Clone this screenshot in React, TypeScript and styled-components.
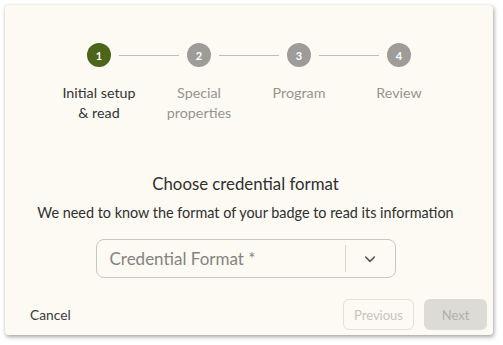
import React from "react";
import styled, { createGlobalStyle } from "styled-components";

const Global = createGlobalStyle`
  html, body { margin: 0; padding: 0; background: #ffffff; }
  body { font-family: "Lato", "Noto Sans", sans-serif; }
`;

const Page = styled.div`
  padding: 5px 10px 10px 5px;
`;

const Card = styled.div`
  width: 488px;
  height: 330px;
  box-sizing: border-box;
  background: #fdfaf3;
  border-radius: 3px;
  box-shadow: 1px 2px 4px rgba(0, 0, 0, 0.35), 0 0 1px rgba(0, 0, 0, 0.2);
  display: flex;
  flex-direction: column;
  padding: 38px 6px 5px 6px;
`;

const Stepper = styled.div`
  display: flex;
  flex-direction: column;
  align-items: center;
`;

const CircleRow = styled.div`
  display: flex;
  align-items: center;
`;

const Circle = styled.div<{ $active?: boolean }>`
  width: 24px;
  height: 24px;
  border-radius: 50%;
  background: ${(p) => (p.$active ? "#4b651b" : "#9d9c98")};
  color: #ffffff;
  font-size: 11px;
  font-weight: 700;
  display: flex;
  align-items: center;
  justify-content: center;
`;

const Connector = styled.div`
  width: 60px;
  height: 1px;
  margin: 0 8px;
  background: #bdbdbd;
`;

const LabelRow = styled.div`
  display: grid;
  grid-template-columns: repeat(4, 100px);
  margin-top: 16px;
`;

const StepLabel = styled.div<{ $active?: boolean }>`
  text-align: center;
  font-size: 14.3px;
  line-height: 20px;
  color: ${(p) => (p.$active ? "#333333" : "#96948f")};
`;

const Body = styled.div`
  display: flex;
  flex-direction: column;
  align-items: center;
  margin-top: 51px;
  padding-right: 7px;
`;

const Title = styled.div`
  font-size: 16.8px;
  line-height: 20px;
  color: #2f2f2f;
`;

const Subtitle = styled.div`
  margin-top: 9px;
  font-size: 14.4px;
  line-height: 20px;
  color: #2f2f2f;
`;

const Select = styled.div`
  margin-top: 16px;
  width: 300px;
  height: 39px;
  box-sizing: border-box;
  border: 1px solid #c9c7c2;
  border-radius: 8px;
  display: flex;
  align-items: center;
`;

const Placeholder = styled.div`
  flex: 1;
  padding-left: 13px;
  font-size: 17px;
  color: #85837e;
`;

const Divider = styled.div`
  width: 1px;
  height: 27px;
  background: #d8d6d1;
`;

const Chevron = styled.div`
  width: 49px;
  display: flex;
  align-items: center;
  justify-content: center;
  color: #555;
`;

const Footer = styled.div`
  margin-top: auto;
  display: flex;
  align-items: center;
  padding-left: 18px;
`;

const TextButton = styled.button`
  background: none;
  border: none;
  font-family: inherit;
  font-size: 13.8px;
  color: #3a3a3a;
  padding: 6px 6px 6px 1px;
  margin-right: auto;
`;

const OutlineButton = styled.button`
  height: 31px;
  width: 71px;
  box-sizing: border-box;
  border: 1px solid #e4e1d9;
  border-radius: 6px;
  background: transparent;
  font-family: inherit;
  font-size: 13px;
  color: #c6c4be;
  margin-right: 1px;
`;

const FilledButton = styled.button`
  height: 31px;
  width: 63px;
  margin-left: 9px;
  box-sizing: border-box;
  border: none;
  border-radius: 6px;
  background: #dddbd6;
  font-family: inherit;
  font-size: 13px;
  color: #b1afa9;
`;

const steps = [
  { n: 1, label: ["Initial setup", "& read"] },
  { n: 2, label: ["Special", "properties"] },
  { n: 3, label: ["Program"] },
  { n: 4, label: ["Review"] },
];

export default function App() {
  return (
    <>
      <Global />
      <Page>
        <Card>
          <Stepper>
            <CircleRow>
              {steps.map((s, i) => (
                <React.Fragment key={s.n}>
                  {i > 0 && <Connector />}
                  <Circle $active={i === 0}>{s.n}</Circle>
                </React.Fragment>
              ))}
            </CircleRow>
            <LabelRow>
              {steps.map((s, i) => (
                <StepLabel key={s.n} $active={i === 0}>
                  {s.label.map((l) => (
                    <div key={l}>{l}</div>
                  ))}
                </StepLabel>
              ))}
            </LabelRow>
          </Stepper>
          <Body>
            <Title>Choose credential format</Title>
            <Subtitle>We need to know the format of your badge to read its information</Subtitle>
            <Select>
              <Placeholder>Credential Format *</Placeholder>
              <Divider />
              <Chevron>
                <svg width="16" height="16" viewBox="0 0 24 24" fill="none" stroke="currentColor" strokeWidth="2.4" strokeLinecap="round" strokeLinejoin="round">
                  <path d="M5.5 9l6.5 6.5 6.5-6.5" />
                </svg>
              </Chevron>
            </Select>
          </Body>
          <Footer>
            <TextButton>Cancel</TextButton>
            <OutlineButton>Previous</OutlineButton>
            <FilledButton>Next</FilledButton>
          </Footer>
        </Card>
      </Page>
    </>
  );
}
